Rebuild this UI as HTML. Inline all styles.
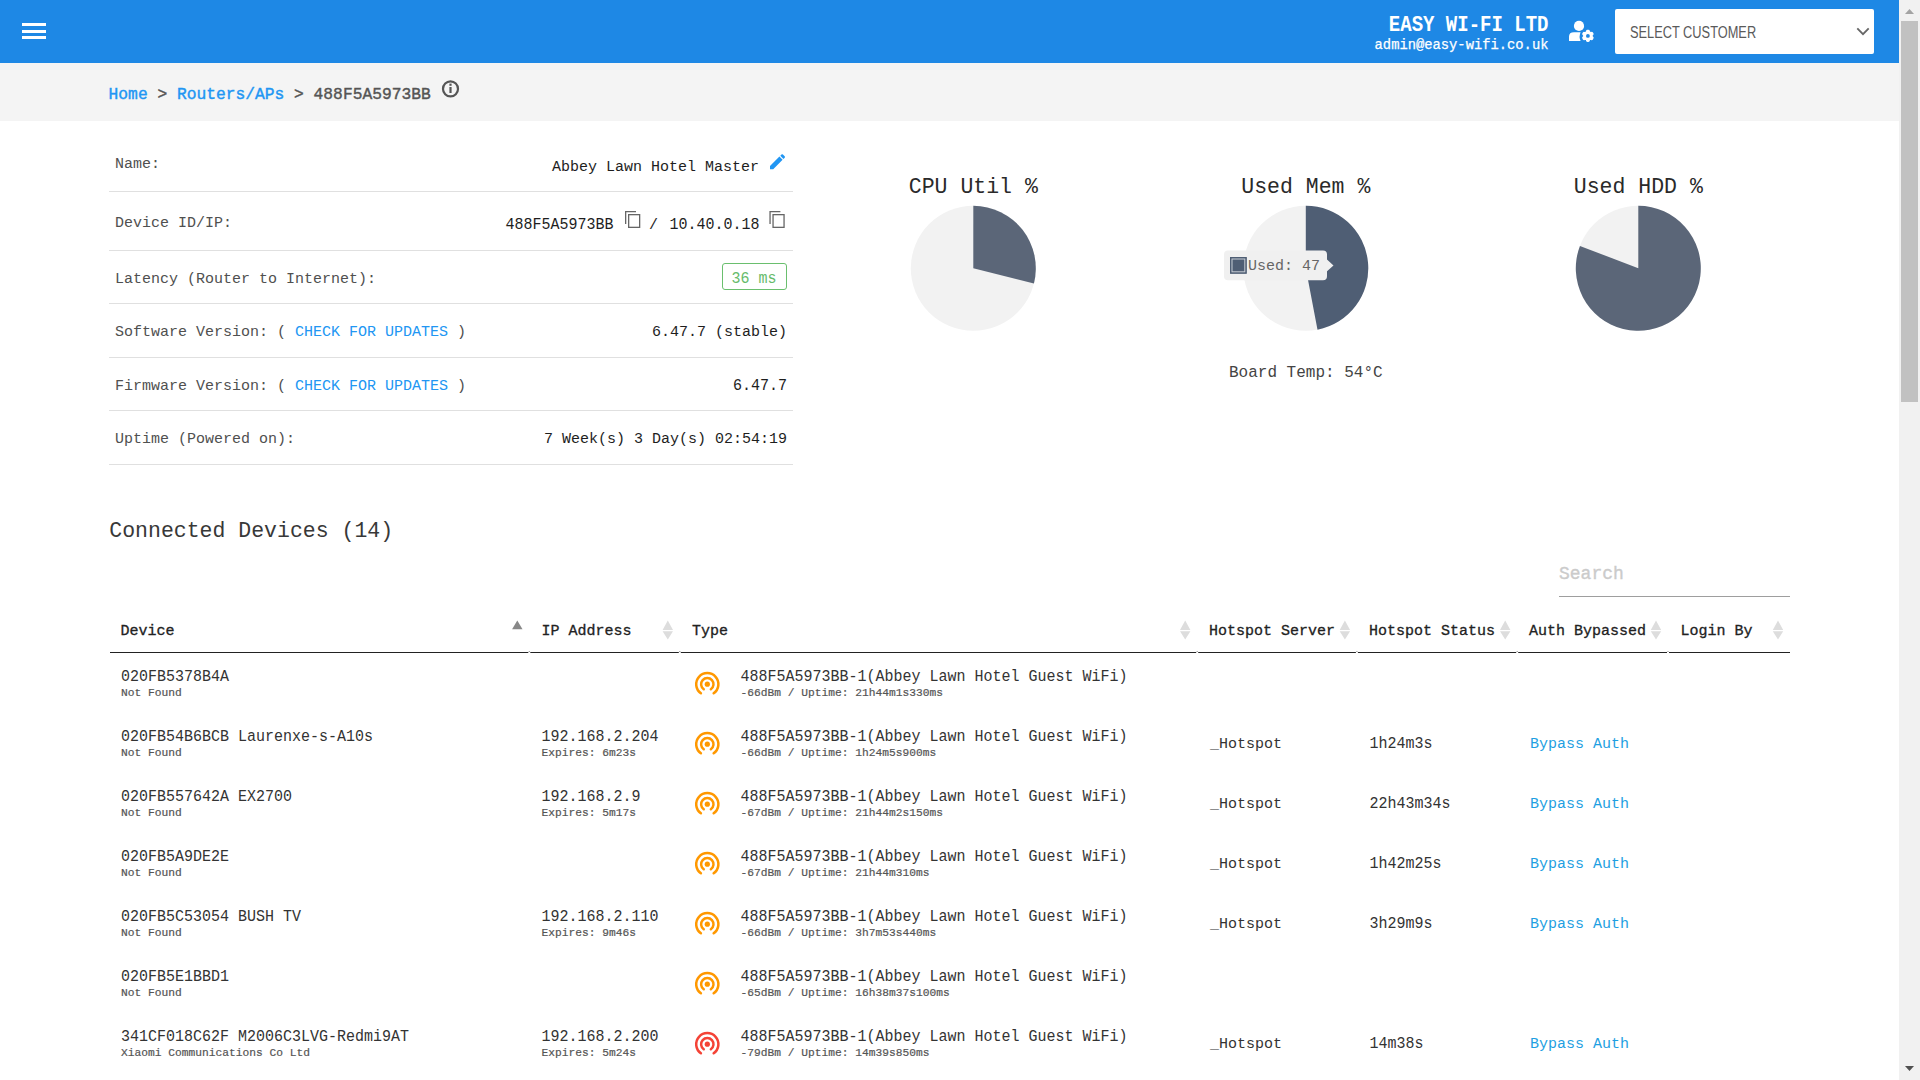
<!DOCTYPE html>
<html><head><meta charset="utf-8"><title>Router</title>
<style>
html,body{margin:0;padding:0;}
body{width:1920px;height:1080px;overflow:hidden;position:relative;background:#fff;font-family:"Liberation Mono",monospace;}
.t{position:absolute;white-space:pre;}
.r{position:absolute;}
svg{position:absolute;overflow:visible;}
</style></head><body>
<div class="r" style="left:0;top:0;width:1899px;height:63px;background:#1e88e5"></div>
<div class="r" style="left:22px;top:23px;width:24px;height:3px;background:#fff"></div>
<div class="r" style="left:22px;top:29.5px;width:24px;height:3px;background:#fff"></div>
<div class="r" style="left:22px;top:36px;width:24px;height:3px;background:#fff"></div>
<div class="t" style="left:1388.87px;top:17.00px;font-size:19px;line-height:19px;color:#fff;font-weight:bold;transform:scaleY(1.14);transform-origin:0 14px;">EASY WI-FI LTD</div>
<div class="t" style="left:1374.59px;top:39.00px;font-size:13.8px;line-height:13.8px;color:#fff;font-weight:normal;-webkit-text-stroke:0.25px currentColor;">admin@easy-wifi.co.uk</div>
<svg style="left:0;top:0" width="1920" height="63" viewBox="0 0 1920 63">
<circle cx="1579" cy="25.9" r="5.1" fill="#fff"/>
<path d="M1569 41 L1569 36.5 Q1569 32.2 1574 32.2 L1580.6 32.2 Q1578.6 36.5 1580.6 41 Z" fill="#fff"/>
<g transform="translate(1587.9 35.9)" fill="#fff">
<circle r="4.8"/>
<rect x="-1.9" y="-6.1" width="3.8" height="12.2" rx="1.4"/>
<rect x="-1.9" y="-6.1" width="3.8" height="12.2" rx="1.4" transform="rotate(60)"/>
<rect x="-1.9" y="-6.1" width="3.8" height="12.2" rx="1.4" transform="rotate(120)"/>
<circle r="1.9" fill="#1e88e5"/>
</g>
</svg>
<div class="r" style="left:1615px;top:9px;width:259px;height:45px;background:#fff;border-radius:2px"></div>
<div class="t" style="left:1629.5px;top:23.5px;font-family:'Liberation Sans',sans-serif;font-size:16px;line-height:18px;color:#5a5a5a;transform:scaleX(0.8);transform-origin:0 0">SELECT CUSTOMER</div>
<svg style="left:0;top:0" width="1920" height="63"><path d="M1857.3 28.3 L1863 34.2 L1868.7 28.3" fill="none" stroke="#666" stroke-width="1.8"/></svg>
<div class="r" style="left:0;top:63px;width:1899px;height:58px;background:#f4f4f4"></div>
<div class="t" style="left:108.6px;top:87px;font-size:16.28px;line-height:16.28px;color:#555;-webkit-text-stroke:0.4px currentColor;transform:scaleY(1.06);transform-origin:0 12px;"><span style="color:#2196f3">Home</span> &gt; <span style="color:#2196f3">Routers/APs</span> &gt; 488F5A5973BB</div>
<svg style="left:0;top:0" width="1920" height="130">
<circle cx="450.5" cy="88.9" r="7.5" fill="none" stroke="#555" stroke-width="2.2"/>
<rect x="449.4" y="87" width="2.2" height="6" fill="#555"/>
<rect x="449.4" y="83.6" width="2.2" height="2.2" fill="#555"/>
</svg>
<div class="r" style="left:109px;top:191px;width:684px;height:1px;background:#e0e0e0"></div>
<div class="r" style="left:109px;top:250px;width:684px;height:1px;background:#e0e0e0"></div>
<div class="r" style="left:109px;top:303px;width:684px;height:1px;background:#e0e0e0"></div>
<div class="r" style="left:109px;top:357px;width:684px;height:1px;background:#e0e0e0"></div>
<div class="r" style="left:109px;top:410px;width:684px;height:1px;background:#e0e0e0"></div>
<div class="r" style="left:109px;top:464px;width:684px;height:1px;background:#e0e0e0"></div>
<div class="t" style="left:115.00px;top:157.00px;font-size:15px;line-height:15px;color:#505050;font-weight:normal;transform:scaleY(1.016);transform-origin:0 11px;">Name:</div>
<div class="t" style="left:115.00px;top:216.00px;font-size:15px;line-height:15px;color:#505050;font-weight:normal;transform:scaleY(1.033);transform-origin:0 11px;">Device ID/IP:</div>
<div class="t" style="left:115.00px;top:272.00px;font-size:15px;line-height:15px;color:#505050;font-weight:normal;transform:scaleY(1.009);transform-origin:0 11px;">Latency (Router to Internet):</div>
<div class="t" style="left:115px;top:325px;font-size:15px;line-height:15px;color:#505050">Software Version: ( <span style="color:#2196f3">CHECK FOR UPDATES</span> )</div>
<div class="t" style="left:115px;top:379px;font-size:15px;line-height:15px;color:#505050">Firmware Version: ( <span style="color:#2196f3">CHECK FOR UPDATES</span> )</div>
<div class="t" style="left:115.00px;top:432.00px;font-size:15px;line-height:15px;color:#505050;font-weight:normal;transform:scaleY(1.009);transform-origin:0 11px;">Uptime (Powered on):</div>
<div class="t" style="left:551.97px;top:160.00px;font-size:15px;line-height:15px;color:#1e1e1e;font-weight:normal;transform:scaleY(1.016);transform-origin:0 11px;">Abbey Lawn Hotel Master</div>
<svg style="left:0;top:0" width="1920" height="300">
<path d="M770 166 L770 169.2 L773.2 169.2 L782.6 159.8 L779.4 156.6 Z M784.7 157.7 C785.1 157.3 785.1 156.7 784.7 156.3 L782.9 154.5 C782.5 154.1 781.9 154.1 781.5 154.5 L780.3 155.7 L783.5 158.9 Z" fill="#2196f3"/>
</svg>
<div class="t" style="left:505.50px;top:218.00px;font-size:15px;line-height:15px;color:#1e1e1e;font-weight:normal;transform:scaleY(1.079);transform-origin:0 11px;">488F5A5973BB</div>
<div class="t" style="left:640.00px;top:218.00px;font-size:15px;line-height:15px;color:#1e1e1e;font-weight:normal;"> / </div>
<div class="t" style="left:669.50px;top:218.00px;font-size:15px;line-height:15px;color:#1e1e1e;font-weight:normal;transform:scaleY(1.055);transform-origin:0 11px;">10.40.0.18</div>
<svg style="left:0;top:0" width="1920" height="300"><g fill="none" stroke="#666" stroke-width="1.3"><path d="M625.65 224 L625.65 211.65 L636 211.65"/><rect x="628.65" y="214.65" width="11" height="12.7"/></g></svg>
<svg style="left:0;top:0" width="1920" height="300"><g fill="none" stroke="#666" stroke-width="1.3"><path d="M770.05 224 L770.05 211.65 L780.4 211.65"/><rect x="773.05" y="214.65" width="11" height="12.7"/></g></svg>
<div class="r" style="left:722px;top:263px;width:63px;height:25px;border:1px solid #6abf6e;border-radius:3px"></div>
<div class="t" style="left:731.50px;top:272.00px;font-size:15px;line-height:15px;color:#66bb6a;font-weight:normal;transform:scaleY(1.040);transform-origin:0 11px;">36 ms</div>
<div class="t" style="left:651.98px;top:325.00px;font-size:15px;line-height:15px;color:#1e1e1e;font-weight:normal;transform:scaleY(1.023);transform-origin:0 11px;">6.47.7 (stable)</div>
<div class="t" style="left:732.99px;top:379.00px;font-size:15px;line-height:15px;color:#1e1e1e;font-weight:normal;transform:scaleY(1.053);transform-origin:0 11px;">6.47.7</div>
<div class="t" style="left:543.96px;top:432.00px;font-size:15px;line-height:15px;color:#1e1e1e;font-weight:normal;transform:scaleY(1.034);transform-origin:0 11px;">7 Week(s) 3 Day(s) 02:54:19</div>
<svg style="left:0;top:0" width="1920" height="400">
<circle cx="973.3" cy="268.3" r="62.5" fill="#f2f2f2"/><path d="M973.3 268.3 L973.3 205.8 A62.5 62.5 0 0 1 1033.94 283.42 Z" fill="#5b6678"/>
<circle cx="1305.8" cy="268.3" r="62.5" fill="#f2f2f2"/><path d="M1305.8 268.3 L1305.8 205.8 A62.5 62.5 0 0 1 1317.51 329.69 Z" fill="#4f5e74"/>
<circle cx="1638.3" cy="268.3" r="62.5" fill="#f2f2f2"/><path d="M1638.3 268.3 L1638.3 205.8 A62.5 62.5 0 1 1 1579.95 245.90 Z" fill="#5b6678"/>
</svg>
<div class="t" style="left:908.79px;top:177.30px;font-size:21.5px;line-height:21.5px;color:#2a2a2a;font-weight:normal;transform:scaleY(1.040);transform-origin:0 16px;">CPU Util %</div>
<div class="t" style="left:1241.29px;top:177.30px;font-size:21.5px;line-height:21.5px;color:#2a2a2a;font-weight:normal;transform:scaleY(1.020);transform-origin:0 16px;">Used Mem %</div>
<div class="t" style="left:1573.79px;top:177.30px;font-size:21.5px;line-height:21.5px;color:#2a2a2a;font-weight:normal;transform:scaleY(1.040);transform-origin:0 16px;">Used HDD %</div>
<svg style="left:0;top:0" width="1920" height="400">
<path d="M1228 250.5 L1323 250.5 Q1327 250.5 1327 254.5 L1327 259.5 L1333.5 265.4 L1327 271.3 L1327 276.3 Q1327 280.3 1323 280.3 L1228 280.3 Q1224 280.3 1224 276.3 L1224 254.5 Q1224 250.5 1228 250.5 Z" fill="#f0f0f0"/>
<rect x="1230.5" y="257.5" width="15.8" height="15.8" fill="#4f5e74" stroke="#4f5e74" stroke-width="1"/>
<rect x="1232" y="259" width="12.8" height="12.8" fill="#4f5e74" stroke="#c8cdd5" stroke-width="1"/>
</svg>
<div class="t" style="left:1248.00px;top:259.30px;font-size:15px;line-height:15px;color:#666;font-weight:normal;transform:scaleY(1.034);transform-origin:0 11px;">Used: 47</div>
<div class="t" style="left:1228.99px;top:365.30px;font-size:16px;line-height:16px;color:#444;font-weight:normal;transform:scaleY(1.028);transform-origin:0 12px;">Board Temp: 54°C</div>
<div class="t" style="left:109.30px;top:521.00px;font-size:21.5px;line-height:21.5px;color:#383838;font-weight:normal;transform:scaleY(1.016);transform-origin:0 16px;">Connected Devices (14)</div>
<div class="t" style="left:1559.00px;top:565.00px;font-size:18px;line-height:18px;color:#cbcbcb;font-weight:normal;-webkit-text-stroke:0.35px currentColor;transform:scaleY(1.013);transform-origin:0 14px;">Search</div>
<div class="r" style="left:1559px;top:596px;width:231px;height:1px;background:#9e9e9e"></div>
<div class="t" style="left:120.50px;top:624.00px;font-size:15px;line-height:15px;color:#222;font-weight:normal;-webkit-text-stroke:0.3px currentColor;transform:scaleY(1.013);transform-origin:0 11px;">Device</div>
<div class="t" style="left:541.50px;top:624.00px;font-size:15px;line-height:15px;color:#222;font-weight:normal;-webkit-text-stroke:0.3px currentColor;transform:scaleY(1.026);transform-origin:0 11px;">IP Address</div>
<div class="t" style="left:692.00px;top:624.00px;font-size:15px;line-height:15px;color:#222;font-weight:normal;-webkit-text-stroke:0.3px currentColor;transform:scaleY(1.020);transform-origin:0 11px;">Type</div>
<div class="t" style="left:1209.00px;top:624.00px;font-size:15px;line-height:15px;color:#222;font-weight:normal;-webkit-text-stroke:0.3px currentColor;transform:scaleY(1.012);transform-origin:0 11px;">Hotspot Server</div>
<div class="t" style="left:1369.00px;top:624.00px;font-size:15px;line-height:15px;color:#222;font-weight:normal;-webkit-text-stroke:0.3px currentColor;transform:scaleY(1.012);transform-origin:0 11px;">Hotspot Status</div>
<div class="t" style="left:1529.00px;top:624.00px;font-size:15px;line-height:15px;color:#222;font-weight:normal;-webkit-text-stroke:0.3px currentColor;transform:scaleY(1.013);transform-origin:0 11px;">Auth Bypassed</div>
<div class="t" style="left:1680.50px;top:624.00px;font-size:15px;line-height:15px;color:#222;font-weight:normal;-webkit-text-stroke:0.3px currentColor;transform:scaleY(1.023);transform-origin:0 11px;">Login By</div>
<svg style="left:0;top:0" width="1920" height="700">
<rect x="110" y="652" width="1680" height="1" fill="#222"/>
<rect x="528.3" y="652" width="2" height="1" fill="#fff"/><rect x="528.7" y="651" width="1.2" height="1" fill="#999"/>
<rect x="678.8" y="652" width="2" height="1" fill="#fff"/><rect x="679.2" y="651" width="1.2" height="1" fill="#999"/>
<rect x="1196.2" y="652" width="2" height="1" fill="#fff"/><rect x="1196.6" y="651" width="1.2" height="1" fill="#999"/>
<rect x="1355.9" y="652" width="2" height="1" fill="#fff"/><rect x="1356.3" y="651" width="1.2" height="1" fill="#999"/>
<rect x="1516.2" y="652" width="2" height="1" fill="#fff"/><rect x="1516.6" y="651" width="1.2" height="1" fill="#999"/>
<rect x="1667.0" y="652" width="2" height="1" fill="#fff"/><rect x="1667.4" y="651" width="1.2" height="1" fill="#999"/>
<path d="M512.0999999999999 629.2 L517.3 620.4 L522.5 629.2 Z" fill="#888"/>
<path d="M662.5999999999999 630 L667.8 620.5 L673.0 630 Z M662.5999999999999 631.2 L667.8 639.5 L673.0 631.2 Z" fill="#ddd"/>
<path d="M1180.0 630 L1185.2 620.5 L1190.4 630 Z M1180.0 631.2 L1185.2 639.5 L1190.4 631.2 Z" fill="#ddd"/>
<path d="M1339.7 630 L1344.9 620.5 L1350.1000000000001 630 Z M1339.7 631.2 L1344.9 639.5 L1350.1000000000001 631.2 Z" fill="#ddd"/>
<path d="M1500.0 630 L1505.2 620.5 L1510.4 630 Z M1500.0 631.2 L1505.2 639.5 L1510.4 631.2 Z" fill="#ddd"/>
<path d="M1650.8 630 L1656.0 620.5 L1661.2 630 Z M1650.8 631.2 L1656.0 639.5 L1661.2 631.2 Z" fill="#ddd"/>
<path d="M1772.8 630 L1778.0 620.5 L1783.2 630 Z M1772.8 631.2 L1778.0 639.5 L1783.2 631.2 Z" fill="#ddd"/>
</svg>
<svg style="left:0;top:0" width="1920" height="1080">
<circle cx="707.3" cy="684.2" r="2.6" fill="#ff9800"/><path d="M703.74 689.28 A6.2 6.2 0 1 1 710.86 689.28" fill="none" stroke="#ff9800" stroke-width="2.5" stroke-linecap="round"/><path d="M700.93 693.29 A11.1 11.1 0 1 1 713.67 693.29" fill="none" stroke="#ff9800" stroke-width="2.5" stroke-linecap="round"/>
<circle cx="707.3" cy="744.2" r="2.6" fill="#ff9800"/><path d="M703.74 749.28 A6.2 6.2 0 1 1 710.86 749.28" fill="none" stroke="#ff9800" stroke-width="2.5" stroke-linecap="round"/><path d="M700.93 753.29 A11.1 11.1 0 1 1 713.67 753.29" fill="none" stroke="#ff9800" stroke-width="2.5" stroke-linecap="round"/>
<circle cx="707.3" cy="804.2" r="2.6" fill="#ff9800"/><path d="M703.74 809.28 A6.2 6.2 0 1 1 710.86 809.28" fill="none" stroke="#ff9800" stroke-width="2.5" stroke-linecap="round"/><path d="M700.93 813.29 A11.1 11.1 0 1 1 713.67 813.29" fill="none" stroke="#ff9800" stroke-width="2.5" stroke-linecap="round"/>
<circle cx="707.3" cy="864.2" r="2.6" fill="#ff9800"/><path d="M703.74 869.28 A6.2 6.2 0 1 1 710.86 869.28" fill="none" stroke="#ff9800" stroke-width="2.5" stroke-linecap="round"/><path d="M700.93 873.29 A11.1 11.1 0 1 1 713.67 873.29" fill="none" stroke="#ff9800" stroke-width="2.5" stroke-linecap="round"/>
<circle cx="707.3" cy="924.2" r="2.6" fill="#ff9800"/><path d="M703.74 929.28 A6.2 6.2 0 1 1 710.86 929.28" fill="none" stroke="#ff9800" stroke-width="2.5" stroke-linecap="round"/><path d="M700.93 933.29 A11.1 11.1 0 1 1 713.67 933.29" fill="none" stroke="#ff9800" stroke-width="2.5" stroke-linecap="round"/>
<circle cx="707.3" cy="984.2" r="2.6" fill="#ff9800"/><path d="M703.74 989.28 A6.2 6.2 0 1 1 710.86 989.28" fill="none" stroke="#ff9800" stroke-width="2.5" stroke-linecap="round"/><path d="M700.93 993.29 A11.1 11.1 0 1 1 713.67 993.29" fill="none" stroke="#ff9800" stroke-width="2.5" stroke-linecap="round"/>
<circle cx="707.3" cy="1044.2" r="2.6" fill="#f44336"/><path d="M703.74 1049.28 A6.2 6.2 0 1 1 710.86 1049.28" fill="none" stroke="#f44336" stroke-width="2.5" stroke-linecap="round"/><path d="M700.93 1053.29 A11.1 11.1 0 1 1 713.67 1053.29" fill="none" stroke="#f44336" stroke-width="2.5" stroke-linecap="round"/>
</svg>
<div class="t" style="left:121.00px;top:669.80px;font-size:15px;line-height:15px;color:#333;font-weight:normal;transform:scaleY(1.079);transform-origin:0 11px;">020FB5378B4A</div>
<div class="t" style="left:121.00px;top:687.80px;font-size:11.25px;line-height:11.25px;color:#555;font-weight:normal;-webkit-text-stroke:0.2px currentColor;transform:scaleY(1.020);transform-origin:0 8px;">Not Found</div>
<div class="t" style="left:740.50px;top:669.80px;font-size:15px;line-height:15px;color:#333;font-weight:normal;transform:scaleY(1.038);transform-origin:0 11px;">488F5A5973BB-1(Abbey Lawn Hotel Guest WiFi)</div>
<div class="t" style="left:740.50px;top:687.80px;font-size:11.25px;line-height:11.25px;color:#555;font-weight:normal;-webkit-text-stroke:0.2px currentColor;transform:scaleY(1.035);transform-origin:0 8px;">-66dBm / Uptime: 21h44m1s330ms</div>
<div class="t" style="left:121.00px;top:729.80px;font-size:15px;line-height:15px;color:#333;font-weight:normal;transform:scaleY(1.047);transform-origin:0 11px;">020FB54B6BCB Laurenxe-s-A10s</div>
<div class="t" style="left:121.00px;top:747.80px;font-size:11.25px;line-height:11.25px;color:#555;font-weight:normal;-webkit-text-stroke:0.2px currentColor;transform:scaleY(1.020);transform-origin:0 8px;">Not Found</div>
<div class="t" style="left:541.50px;top:729.80px;font-size:15px;line-height:15px;color:#333;font-weight:normal;transform:scaleY(1.061);transform-origin:0 11px;">192.168.2.204</div>
<div class="t" style="left:541.50px;top:747.80px;font-size:11.25px;line-height:11.25px;color:#555;font-weight:normal;-webkit-text-stroke:0.2px currentColor;transform:scaleY(1.024);transform-origin:0 8px;">Expires: 6m23s</div>
<div class="t" style="left:740.50px;top:729.80px;font-size:15px;line-height:15px;color:#333;font-weight:normal;transform:scaleY(1.038);transform-origin:0 11px;">488F5A5973BB-1(Abbey Lawn Hotel Guest WiFi)</div>
<div class="t" style="left:740.50px;top:747.80px;font-size:11.25px;line-height:11.25px;color:#555;font-weight:normal;-webkit-text-stroke:0.2px currentColor;transform:scaleY(1.033);transform-origin:0 8px;">-66dBm / Uptime: 1h24m5s900ms</div>
<div class="t" style="left:1210.00px;top:736.90px;font-size:15px;line-height:15px;color:#333;font-weight:normal;transform:scaleY(1.010);transform-origin:0 11px;">_Hotspot</div>
<div class="t" style="left:1369.50px;top:736.90px;font-size:15px;line-height:15px;color:#333;font-weight:normal;transform:scaleY(1.045);transform-origin:0 11px;">1h24m3s</div>
<div class="t" style="left:1530.00px;top:736.90px;font-size:15px;line-height:15px;color:#1e9fe2;font-weight:normal;transform:scaleY(1.016);transform-origin:0 11px;">Bypass Auth</div>
<div class="t" style="left:121.00px;top:789.80px;font-size:15px;line-height:15px;color:#333;font-weight:normal;transform:scaleY(1.079);transform-origin:0 11px;">020FB557642A EX2700</div>
<div class="t" style="left:121.00px;top:807.80px;font-size:11.25px;line-height:11.25px;color:#555;font-weight:normal;-webkit-text-stroke:0.2px currentColor;transform:scaleY(1.020);transform-origin:0 8px;">Not Found</div>
<div class="t" style="left:541.50px;top:789.80px;font-size:15px;line-height:15px;color:#333;font-weight:normal;transform:scaleY(1.057);transform-origin:0 11px;">192.168.2.9</div>
<div class="t" style="left:541.50px;top:807.80px;font-size:11.25px;line-height:11.25px;color:#555;font-weight:normal;-webkit-text-stroke:0.2px currentColor;transform:scaleY(1.024);transform-origin:0 8px;">Expires: 5m17s</div>
<div class="t" style="left:740.50px;top:789.80px;font-size:15px;line-height:15px;color:#333;font-weight:normal;transform:scaleY(1.038);transform-origin:0 11px;">488F5A5973BB-1(Abbey Lawn Hotel Guest WiFi)</div>
<div class="t" style="left:740.50px;top:807.80px;font-size:11.25px;line-height:11.25px;color:#555;font-weight:normal;-webkit-text-stroke:0.2px currentColor;transform:scaleY(1.035);transform-origin:0 8px;">-67dBm / Uptime: 21h44m2s150ms</div>
<div class="t" style="left:1210.00px;top:796.90px;font-size:15px;line-height:15px;color:#333;font-weight:normal;transform:scaleY(1.010);transform-origin:0 11px;">_Hotspot</div>
<div class="t" style="left:1369.50px;top:796.90px;font-size:15px;line-height:15px;color:#333;font-weight:normal;transform:scaleY(1.053);transform-origin:0 11px;">22h43m34s</div>
<div class="t" style="left:1530.00px;top:796.90px;font-size:15px;line-height:15px;color:#1e9fe2;font-weight:normal;transform:scaleY(1.016);transform-origin:0 11px;">Bypass Auth</div>
<div class="t" style="left:121.00px;top:849.80px;font-size:15px;line-height:15px;color:#333;font-weight:normal;transform:scaleY(1.079);transform-origin:0 11px;">020FB5A9DE2E</div>
<div class="t" style="left:121.00px;top:867.80px;font-size:11.25px;line-height:11.25px;color:#555;font-weight:normal;-webkit-text-stroke:0.2px currentColor;transform:scaleY(1.020);transform-origin:0 8px;">Not Found</div>
<div class="t" style="left:740.50px;top:849.80px;font-size:15px;line-height:15px;color:#333;font-weight:normal;transform:scaleY(1.038);transform-origin:0 11px;">488F5A5973BB-1(Abbey Lawn Hotel Guest WiFi)</div>
<div class="t" style="left:740.50px;top:867.80px;font-size:11.25px;line-height:11.25px;color:#555;font-weight:normal;-webkit-text-stroke:0.2px currentColor;transform:scaleY(1.035);transform-origin:0 8px;">-67dBm / Uptime: 21h44m310ms</div>
<div class="t" style="left:1210.00px;top:856.90px;font-size:15px;line-height:15px;color:#333;font-weight:normal;transform:scaleY(1.010);transform-origin:0 11px;">_Hotspot</div>
<div class="t" style="left:1369.50px;top:856.90px;font-size:15px;line-height:15px;color:#333;font-weight:normal;transform:scaleY(1.049);transform-origin:0 11px;">1h42m25s</div>
<div class="t" style="left:1530.00px;top:856.90px;font-size:15px;line-height:15px;color:#1e9fe2;font-weight:normal;transform:scaleY(1.016);transform-origin:0 11px;">Bypass Auth</div>
<div class="t" style="left:121.00px;top:909.80px;font-size:15px;line-height:15px;color:#333;font-weight:normal;transform:scaleY(1.079);transform-origin:0 11px;">020FB5C53054 BUSH TV</div>
<div class="t" style="left:121.00px;top:927.80px;font-size:11.25px;line-height:11.25px;color:#555;font-weight:normal;-webkit-text-stroke:0.2px currentColor;transform:scaleY(1.020);transform-origin:0 8px;">Not Found</div>
<div class="t" style="left:541.50px;top:909.80px;font-size:15px;line-height:15px;color:#333;font-weight:normal;transform:scaleY(1.061);transform-origin:0 11px;">192.168.2.110</div>
<div class="t" style="left:541.50px;top:927.80px;font-size:11.25px;line-height:11.25px;color:#555;font-weight:normal;-webkit-text-stroke:0.2px currentColor;transform:scaleY(1.024);transform-origin:0 8px;">Expires: 9m46s</div>
<div class="t" style="left:740.50px;top:909.80px;font-size:15px;line-height:15px;color:#333;font-weight:normal;transform:scaleY(1.038);transform-origin:0 11px;">488F5A5973BB-1(Abbey Lawn Hotel Guest WiFi)</div>
<div class="t" style="left:740.50px;top:927.80px;font-size:11.25px;line-height:11.25px;color:#555;font-weight:normal;-webkit-text-stroke:0.2px currentColor;transform:scaleY(1.033);transform-origin:0 8px;">-66dBm / Uptime: 3h7m53s440ms</div>
<div class="t" style="left:1210.00px;top:916.90px;font-size:15px;line-height:15px;color:#333;font-weight:normal;transform:scaleY(1.010);transform-origin:0 11px;">_Hotspot</div>
<div class="t" style="left:1369.50px;top:916.90px;font-size:15px;line-height:15px;color:#333;font-weight:normal;transform:scaleY(1.045);transform-origin:0 11px;">3h29m9s</div>
<div class="t" style="left:1530.00px;top:916.90px;font-size:15px;line-height:15px;color:#1e9fe2;font-weight:normal;transform:scaleY(1.016);transform-origin:0 11px;">Bypass Auth</div>
<div class="t" style="left:121.00px;top:969.80px;font-size:15px;line-height:15px;color:#333;font-weight:normal;transform:scaleY(1.079);transform-origin:0 11px;">020FB5E1BBD1</div>
<div class="t" style="left:121.00px;top:987.80px;font-size:11.25px;line-height:11.25px;color:#555;font-weight:normal;-webkit-text-stroke:0.2px currentColor;transform:scaleY(1.020);transform-origin:0 8px;">Not Found</div>
<div class="t" style="left:740.50px;top:969.80px;font-size:15px;line-height:15px;color:#333;font-weight:normal;transform:scaleY(1.038);transform-origin:0 11px;">488F5A5973BB-1(Abbey Lawn Hotel Guest WiFi)</div>
<div class="t" style="left:740.50px;top:987.80px;font-size:11.25px;line-height:11.25px;color:#555;font-weight:normal;-webkit-text-stroke:0.2px currentColor;transform:scaleY(1.037);transform-origin:0 8px;">-65dBm / Uptime: 16h38m37s100ms</div>
<div class="t" style="left:121.00px;top:1029.80px;font-size:15px;line-height:15px;color:#333;font-weight:normal;transform:scaleY(1.066);transform-origin:0 11px;">341CF018C62F M2006C3LVG-Redmi9AT</div>
<div class="t" style="left:121.00px;top:1047.80px;font-size:11.25px;line-height:11.25px;color:#555;font-weight:normal;-webkit-text-stroke:0.2px currentColor;transform:scaleY(1.013);transform-origin:0 8px;">Xiaomi Communications Co Ltd</div>
<div class="t" style="left:541.50px;top:1029.80px;font-size:15px;line-height:15px;color:#333;font-weight:normal;transform:scaleY(1.061);transform-origin:0 11px;">192.168.2.200</div>
<div class="t" style="left:541.50px;top:1047.80px;font-size:11.25px;line-height:11.25px;color:#555;font-weight:normal;-webkit-text-stroke:0.2px currentColor;transform:scaleY(1.024);transform-origin:0 8px;">Expires: 5m24s</div>
<div class="t" style="left:740.50px;top:1029.80px;font-size:15px;line-height:15px;color:#333;font-weight:normal;transform:scaleY(1.038);transform-origin:0 11px;">488F5A5973BB-1(Abbey Lawn Hotel Guest WiFi)</div>
<div class="t" style="left:740.50px;top:1047.80px;font-size:11.25px;line-height:11.25px;color:#555;font-weight:normal;-webkit-text-stroke:0.2px currentColor;transform:scaleY(1.035);transform-origin:0 8px;">-79dBm / Uptime: 14m39s850ms</div>
<div class="t" style="left:1210.00px;top:1036.90px;font-size:15px;line-height:15px;color:#333;font-weight:normal;transform:scaleY(1.010);transform-origin:0 11px;">_Hotspot</div>
<div class="t" style="left:1369.50px;top:1036.90px;font-size:15px;line-height:15px;color:#333;font-weight:normal;transform:scaleY(1.053);transform-origin:0 11px;">14m38s</div>
<div class="t" style="left:1530.00px;top:1036.90px;font-size:15px;line-height:15px;color:#1e9fe2;font-weight:normal;transform:scaleY(1.016);transform-origin:0 11px;">Bypass Auth</div>
<div class="r" style="left:1899px;top:0;width:21px;height:1080px;background:#f1f1f1"></div>
<div class="r" style="left:1901px;top:21px;width:17px;height:381px;background:#c1c1c1"></div>
<svg style="left:0;top:0" width="1920" height="1080"><path d="M1905 14 L1909.5 9 L1914 14 Z" fill="#a3a3a3"/><path d="M1905 1066 L1909.5 1071 L1914 1066 Z" fill="#505050"/></svg>
</body></html>
